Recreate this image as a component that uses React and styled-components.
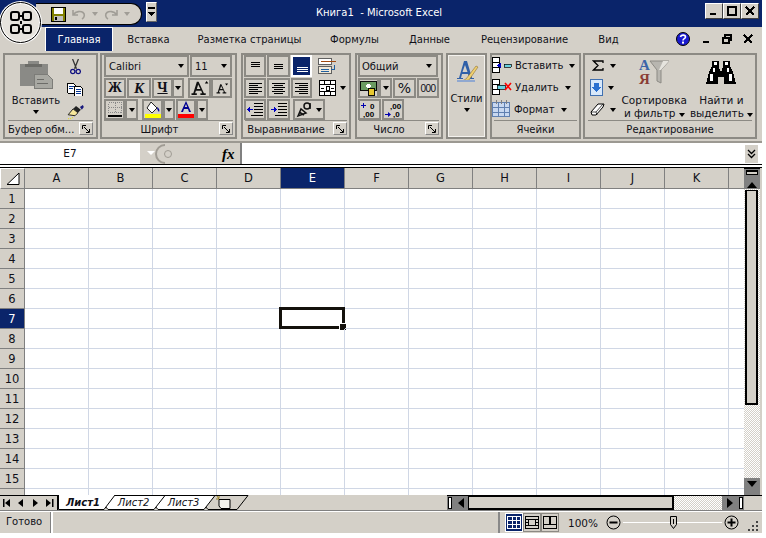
import styled, { createGlobalStyle } from "styled-components";

const FACE = "#d4d0c8";
const NAVY = "#0a246a";
const LINE = "#8c8a84";

const GlobalStyle = createGlobalStyle`
  html, body { margin: 0; background: #fff; }
  * { box-sizing: border-box; }
`;

const Win = styled.div`
  position: relative;
  width: 762px;
  height: 533px;
  background: ${FACE};
  display: flex;
  flex-direction: column;
  overflow: hidden;
  font-family: "DejaVu Sans", sans-serif;
  font-size: 10px;
  color: #101018;
`;

/* title bar */
const TitleBar = styled.div`
  height: 27px;
  flex: none;
  background: ${NAVY};
  display: flex;
  align-items: flex-start;
  padding-right: 3px;
`;
const OfficeBtn = styled.div`
  position: absolute;
  left: 0;
  top: 2px;
  z-index: 3;
  width: 41px;
  height: 41px;
  border-radius: 50%;
  background: #e6e3dd;
  border: 1px solid #000;
  box-shadow: inset 0 0 0 1px #fff, 0 0 0 1px #fff;
  display: flex;
  align-items: center;
  justify-content: center;
`;
const Qat = styled.div`
  width: 106px;
  height: 22px;
  margin: 3px 0 0 36px;
  padding-left: 15px;
  background: ${FACE};
  border-radius: 0 11px 11px 0 / 0 11px 11px 0;
  border: 1px solid #000;
  border-left: 0;
  display: flex;
  align-items: center;
  gap: 6px;
`;
const QatMore = styled.div`
  width: 11px;
  height: 20px;
  margin: 2px 0 0 4px;
  background: ${FACE};
  border: 1px solid #fff;
  border-right-color: #666;
  border-bottom-color: #666;
  display: flex;
  align-items: center;
  justify-content: center;
`;
const Title = styled.div`
  width: 444px;
  text-align: center;
  color: #fff;
  font-size: 10px;
  line-height: 26px;
  white-space: pre;
`;
const WinBtns = styled.div`
  margin: 3px 0 0 auto;
  display: flex;
`;
const WinBtn = styled.div`
  width: 18px;
  height: 16px;
  background: ${FACE};
  border: 1px solid;
  border-color: #fff #404040 #404040 #fff;
  display: flex;
  align-items: center;
  justify-content: center;
`;

/* tabs */
const TabStrip = styled.div`
  height: 24px;
  flex: none;
  padding: 0 9px 0 45px;
  display: flex;
  align-items: stretch;
`;
const Tab = styled.div`
  width: ${(p) => p.$w}px;
  display: flex;
  align-items: center;
  justify-content: center;
  font-size: 10px;
  ${(p) => p.$active && `background: ${NAVY}; color: #fff; border: 1px solid #fff; border-bottom: 0;`}
`;
const TabTools = styled.div`
  margin-left: auto;
  display: flex;
  align-items: center;
  gap: 11px;
`;

/* ribbon */
const Ribbon = styled.div`
  flex: none;
  height: 92px;
  padding: 2px 0 0 3px;
  display: flex;
  align-items: flex-start;
  border-bottom: 2px solid #9c9992;
`;
const Group = styled.div`
  width: ${(p) => p.$w}px;
  margin-left: ${(p) => p.$ml || 0}px;
  height: 86px;
  border: 2px solid ${LINE};
  display: flex;
  flex-direction: column;
`;
const GroupBody = styled.div`
  height: 65px;
  flex: none;
  display: flex;
  ${(p) => p.$col && "flex-direction: column; gap: 1px;"}
  padding: ${(p) => p.$pad || "0 1px"};
`;
const GroupLabel = styled.div`
  position: relative;
  height: 17px;
  margin: 0 ${(p) => p.$inset || 2}px;
  border-top: 1px solid ${LINE};
  display: flex;
  align-items: center;
  justify-content: ${(p) => (p.$left ? "flex-start" : "center")};
  font-size: 10px;
  white-space: nowrap;
  padding-right: ${(p) => p.$pr || 0}px;
`;
const Launcher = styled.div`
  position: absolute;
  right: 0;
  top: 1px;
  width: 14px;
  height: 13px;
  border: 1px solid #fff;
  border-right-color: #888;
  border-bottom-color: #888;
  display: flex;
  align-items: center;
  justify-content: center;
`;
const ToolRow = styled.div`
  display: flex;
  height: ${(p) => p.$h || 20}px;
  gap: ${(p) => p.$gap ?? 1}px;
`;
const Tool = styled.div`
  width: ${(p) => p.$w}px;
  margin-left: ${(p) => p.$ml || 0}px;
  flex: none;
  display: flex;
  align-items: center;
  justify-content: ${(p) => p.$justify || "center"};
  padding: ${(p) => p.$pad || 0};
  border: 2px solid ${(p) => (p.$plain ? "transparent" : LINE)};
  background: ${(p) => (p.$active ? NAVY : "transparent")};
  ${(p) => p.$active && "border-color: #fff;"}
  font-size: 10px;
  white-space: nowrap;
`;
const Glyph = styled.span`
  font-family: "Liberation Serif", serif;
  font-weight: 700;
  font-size: ${(p) => p.$size || 14}px;
  font-style: ${(p) => (p.$italic ? "italic" : "normal")};
  text-decoration: ${(p) => (p.$under ? "underline" : "none")};
`;
const Percent = styled.span`
  font-size: 14px;
`;
const Thousands = styled.span`
  font-family: "Liberation Sans", sans-serif;
  font-size: 10px;
  letter-spacing: -0.5px;
`;
const Drop = styled.i`
  display: inline-block;
  flex: none;
  border: solid transparent;
  border-width: 4px 3.5px 0;
  border-top-color: ${(p) => p.$color || "#000"};
  margin-left: ${(p) => p.$ml || 0}px;
  margin-top: ${(p) => p.$mt || 0}px;
`;
const PasteCol = styled.div`
  width: 62px;
  display: flex;
  flex-direction: column;
  align-items: center;
  padding-top: 5px;
`;
const SmallCol = styled.div`
  width: 16px;
  padding-top: 4px;
  display: flex;
  flex-direction: column;
  align-items: center;
  gap: 8px;
`;
const StackText = styled.div`
  margin-top: ${(p) => p.$mt ?? 6}px;
  text-align: center;
  font-size: ${(p) => p.$size || 10.5}px;
  line-height: 13px;
  white-space: nowrap;
`;
const BigBtn = styled.div`
  width: ${(p) => p.$w}px;
  display: flex;
  flex-direction: column;
  align-items: center;
  padding-top: ${(p) => p.$top || 3}px;
`;
const StylesBtn = styled.div`
  width: 41px;
  margin-left: 3px;
  height: 86px;
  border: 2px solid ${LINE};
  box-shadow: inset 0 0 0 1px #f4f2ee;
  display: flex;
  flex-direction: column;
  align-items: center;
  padding-top: 5px;
  font-size: 10px;
  gap: 4px;
`;
const StylesText = styled.span`
  margin-top: 5px;
`;
const CellRow = styled.div`
  height: 22px;
  display: flex;
  align-items: center;
  gap: 3px;
  font-size: 10px;
  white-space: nowrap;
`;
const SmallStack = styled.div`
  width: 36px;
  padding: 2px 0 0 5px;
  display: flex;
  flex-direction: column;
  gap: 5px;
`;
const StackItem = styled.div`
  height: 17px;
  display: flex;
  align-items: center;
  gap: 5px;
  padding-left: ${(p) => p.$pl || 0}px;
`;

/* formula bar */
const FormulaBar = styled.div`
  flex: none;
  height: 21px;
  display: flex;
`;
const NameBox = styled.div`
  width: 140px;
  background: #fff;
  text-align: center;
  line-height: 20px;
  font-size: 10.5px;
`;
const FxZone = styled.div`
  width: 100px;
  display: flex;
  align-items: center;
  padding-left: 6px;
`;
const FxInput = styled.div`
  flex: 1;
  background: #fff;
  border-left: 2px solid #808080;
  display: flex;
  justify-content: flex-end;
  align-items: center;
  padding-right: 4px;
`;
const Expand = styled.div`
  width: 13px;
  height: 18px;
  background: ${FACE};
  display: flex;
  align-items: center;
  justify-content: center;
`;
const SplitBar = styled.div`
  flex: none;
  height: 4px;
  background: #fff;
  border-top: 1px solid #000;
  border-bottom: 1px solid #000;
`;

/* sheet */
const SheetArea = styled.div`
  flex: none;
  height: 327px;
  display: flex;
  background: ${FACE};
`;
const GridClip = styled.div`
  width: 744px;
  overflow: hidden;
  background: #fff;
`;
const HeadRow = styled.div`
  display: flex;
  height: 21px;
`;
const Corner = styled.div`
  width: 25px;
  flex: none;
  background: ${FACE};
  border: 1px solid #fff;
  border-right: 1px solid #808080;
  border-bottom: 1px solid #808080;
  display: flex;
  align-items: center;
  justify-content: center;
`;
const ColHead = styled.div`
  width: 64px;
  flex: none;
  text-align: center;
  line-height: 20px;
  font-size: 11.5px;
  border-right: 1px solid #808080;
  border-bottom: 1px solid #808080;
  background: ${(p) => (p.$on ? NAVY : FACE)};
  color: ${(p) => (p.$on ? "#fff" : "#101018")};
`;
const GridRow = styled.div`
  display: flex;
  height: 20px;
`;
const RowHead = styled.div`
  width: 25px;
  flex: none;
  text-align: center;
  line-height: 20px;
  font-size: 11.5px;
  border-right: 1px solid #808080;
  border-bottom: 1px solid #808080;
  background: ${(p) => (p.$on ? NAVY : FACE)};
  color: ${(p) => (p.$on ? "#fff" : "#101018")};
`;
const Cell = styled.div`
  position: relative;
  width: 64px;
  flex: none;
  border-right: 1px solid #d0d7e5;
  border-bottom: 1px solid #d0d7e5;
`;
const Selection = styled.div`
  position: absolute;
  left: -2px;
  top: -2px;
  right: -1px;
  bottom: -1px;
  border: 3px solid #14110c;
  &::after {
    content: "";
    position: absolute;
    right: -4px;
    bottom: -4px;
    width: 6px;
    height: 6px;
    background: #14110c;
    border: 1px solid #fff;
    border-right: 0;
    border-bottom: 0;
  }
`;
const VScroll = styled.div`
  width: 16px;
  flex: none;
  display: flex;
  flex-direction: column;
  background: repeating-conic-gradient(${FACE} 0 25%, #fff 0 50%) 0 0 / 2px 2px;
`;
const VCap = styled.div`
  flex: none;
  height: 21px;
  padding: 1px 2px 0;
  background: #808080;
  border-top: 1px solid #000;
  display: flex;
  flex-direction: column;
  align-items: stretch;
`;
const Splitter = styled.div`
  height: 5px;
  flex: none;
  background: ${FACE};
  border: 1px solid #000;
  border-top-width: 2px;
`;
const CapArrow = styled.div`
  flex: 1;
  display: flex;
  align-items: center;
  justify-content: center;
`;
const ScrollBtn = styled.div`
  flex: none;
  width: ${(p) => p.$w || 16}px;
  height: ${(p) => p.$h || "auto"};
  background: #808080;
  display: flex;
  align-items: center;
  justify-content: center;
`;
const VThumb = styled.div`
  height: 215px;
  flex: none;
  margin: 1px 2px 0 1px;
  background: ${FACE};
  border: 2px solid #000;
  border-top-width: 1px;
`;
const VFill = styled.div`
  flex: 1;
`;
const Arrow = styled.i`
  display: block;
  border: solid transparent;
  ${(p) => {
    const d = { up: "bottom", down: "top", left: "right", right: "left" }[p.$dir];
    return `border-width: 5px; border-${d}-color: #000; border-${d}-width: 6px; border-${p.$dir}-width: 0;`;
  }}
`;

/* sheet tabs + h scroll */
const TabsRow = styled.div`
  flex: none;
  height: 16px;
  display: flex;
  border-bottom: 1px solid #808080;
`;
const NavBtns = styled.div`
  width: 58px;
  flex: none;
  display: flex;
  align-items: center;
  gap: 4px;
  padding-left: 2px;
  border-top: 1px solid #000;
  border-right: 1px solid #000;
`;
const SheetTabs = styled.div`
  width: 389px;
  flex: none;
  display: flex;
  overflow: hidden;
`;
const SheetTab = styled.div`
  position: relative;
  z-index: ${(p) => p.$z};
  width: ${(p) => p.$w}px;
  padding-left: ${(p) => p.$pl}px;
  flex: none;
  display: flex;
  align-items: center;
  justify-content: center;
  font-style: italic;
  font-size: 10px;
  font-weight: ${(p) => (p.$active ? 700 : 400)};
  & > span { position: relative; }
`;
const TabShape = styled.svg`
  position: absolute;
  left: 0;
  top: 0;
`;
const HScroll = styled.div`
  flex: 1;
  display: flex;
  align-items: stretch;
  background: ${FACE};
  border-top: 1px solid #000;
`;
const HSplit = styled.div`
  width: 6px;
  flex: none;
  background: #808080;
  padding: 1px 1px;
  display: flex;
`;
const HSplitBar = styled.div`
  flex: 1;
  background: #fff;
  border: 1px solid #000;
`;
const HThumb = styled.div`
  width: 206px;
  flex: none;
  background: ${FACE};
  border: 1px solid #000;
  border-width: 1px 2px 2px 1px;
`;
const HFill = styled.div`
  width: 48px;
  flex: none;
  background: repeating-conic-gradient(${FACE} 0 25%, #fff 0 50%) 0 0 / 2px 2px;
`;

/* status bar */
const StatusBar = styled.div`
  flex: 1;
  display: flex;
  align-items: center;
  border-top: 1px solid #fff;
  font-size: 10px;
`;
const StatusText = styled.div`
  width: 53px;
  flex: none;
  height: 100%;
  padding-left: 6px;
  line-height: 20px;
  border-right: 2px solid #fff;
  box-shadow: inset -1px 0 0 #808080;
`;
const ZoomPane = styled.div`
  margin-left: 445px;
  flex: none;
  height: 100%;
  padding-left: 5px;
  border-left: 2px solid #888;
  display: flex;
  align-items: center;
`;
const ViewBtn = styled.div`
  width: 18px;
  flex: none;
  height: 19px;
  background: ${(p) => (p.$on ? NAVY : FACE)};
  border: ${(p) => (p.$on ? "1px solid #fff" : `1px solid ${LINE}`)};
  display: flex;
  align-items: center;
  justify-content: center;
`;
const ZoomLabel = styled.div`
  width: 38px;
  flex: none;
  margin: 0 4px 0 5px;
  text-align: center;
  font-size: 10.5px;
`;
const SliderWrap = styled.div`
  position: relative;
  width: 99px;
  flex: none;
  height: 1px;
  margin: 0 2px;
  background: #fff;
`;
const SliderKnob = styled.svg`
  position: absolute;
  left: 47px;
  top: -6px;
`;
const Grip = styled.svg`
  flex: none;
  margin-left: 7px;
  margin-top: 6px;
`;

/* icons */
const OfficeLogo = () => (
  <svg width="22" height="23" viewBox="0 0 22 23" fill="none" stroke="#000" strokeWidth="2">
    <rect x="1" y="1" width="8" height="8" rx="2" />
    <rect x="13" y="1" width="8" height="8" rx="2" />
    <rect x="1" y="14" width="8" height="8" rx="2" />
    <rect x="13" y="14" width="8" height="8" rx="2" />
    <path d="M9 5h4M9 18h4" />
    <path d="M10 10h2v3h-2z" fill="#000" strokeWidth="0" />
  </svg>
);
const SaveIcon = () => (
  <svg width="15" height="15" viewBox="0 0 15 15" shapeRendering="crispEdges">
    <rect x="0.5" y="0.5" width="14" height="14" fill="#808000" stroke="#000" />
    <rect x="3" y="1" width="9" height="6" fill="#fff" />
    <rect x="3" y="9" width="9" height="5" fill="#c0c0c0" />
    <rect x="4" y="10" width="2" height="3" fill="#000" />
  </svg>
);
const UndoIcon = ({ flip }) => (
  <svg width="14" height="11" viewBox="0 0 14 11" fill="none" stroke="#a09d96" strokeWidth="1.6" style={{ transform: flip ? "scaleX(-1)" : "none" }}>
    <path d="M1 1v5h5M1.5 5.5C4 2 9 2 11 3.5s1.8 5-1 6.5" />
  </svg>
);
const QatMoreIcon = () => (
  <svg width="7" height="10" viewBox="0 0 7 10" shapeRendering="crispEdges">
    <path d="M0 0h7v2H0z" fill="#000" />
    <path d="M0 5h7L3.500 9z" fill="#000" />
  </svg>
);
const Chrome = ({ d }) => (
  <svg width="10" height="10" viewBox="0 0 10 10" fill="none" stroke="#000" strokeWidth="2" shapeRendering="crispEdges">
    <path d={d} />
  </svg>
);
const HelpIcon = () => (
  <svg width="14" height="14" viewBox="0 0 14 14">
    <circle cx="7" cy="7" r="6.5" fill="#1a1ad0" stroke="#000" strokeWidth="1" />
    <path d="M4.5 5C5 2.5 9.5 2.5 9.5 5 9.5 6.8 7 6.6 7 8.5" fill="none" stroke="#fff" strokeWidth="1.6" />
    <rect x="6" y="9.6" width="2" height="2" fill="#fff" />
  </svg>
);
const LaunchIcon = () => (
  <svg width="8" height="8" viewBox="0 0 8 8" fill="none" stroke="#000">
    <path d="M.5 4V.5H4M2 2l5 5M7.5 4v3.5H4" />
  </svg>
);
const PasteIcon = () => (
  <svg width="33" height="30" viewBox="0 0 33 30" shapeRendering="crispEdges">
    <path d="M0 4h8V1h11v3h9v22H0z" fill="#8a8a86" />
    <rect x="5" y="4" width="17" height="3" fill="#6c6c68" />
    <path d="M14 14h13l5 5v9H14z" fill="#a8a8a2" stroke="#7c7c78" />
    <path d="M17 19h7M17 23h11" stroke="#6c6c68" />
  </svg>
);
const CutIcon = () => (
  <svg width="11" height="16" viewBox="0 0 11 16" fill="none" strokeWidth="1.3">
    <path d="M2.500 0l4 10M8.500 0l-4 10" stroke="#333" />
    <circle cx="2.700" cy="12.800" r="2.200" stroke="#101080" />
    <circle cx="8.300" cy="12.800" r="2.200" stroke="#101080" />
  </svg>
);
const CopyIcon = () => (
  <svg width="16" height="14" viewBox="0 0 16 14" fill="#fff" stroke="#000" shapeRendering="crispEdges">
    <path d="M.5.5h6l2 2v8h-8z" />
    <path d="M7.5 3.5h6l2 2v8h-8z" />
    <path d="M2 4h5M2 6h4M9 7h5M9 9h5M9 11h5" fill="none" stroke="#003090" />
  </svg>
);
const PainterIcon = () => (
  <svg width="17" height="16" viewBox="0 0 17 16">
    <path d="M9 2l5 4-3 3-5-4z" fill="#222" />
    <path d="M6 5l5 4-3 3-7-1z" fill="#f6e79a" stroke="#222" />
    <path d="M13 3l3-2 1 2-2 3z" fill="#18187c" />
    <path d="M1 15h1M3 15h1M5 14h1" stroke="#e6e000" />
  </svg>
);
const BorderIcon = () => (
  <svg width="14" height="15" viewBox="0 0 14 15" fill="none" shapeRendering="crispEdges">
    <path d="M.5.5h13v10h-13zM7 .5v10M.5 5.5h13" stroke="#888" strokeDasharray="1 1" />
    <path d="M0 14h14" stroke="#000" strokeWidth="2" />
  </svg>
);
const FillIcon = () => (
  <svg width="16" height="17" viewBox="0 0 16 17">
    <path d="M6 1l6 6-5 5-5-5z" fill="#fff" stroke="#222" />
    <path d="M12 6c2 1 3 3 2 5-1-1-2-3-2-5z" fill="#000090" />
    <rect x="0" y="13" width="16" height="4" fill="#ffff00" />
  </svg>
);
const ColorA = () => (
  <svg width="16" height="17" viewBox="0 0 16 17">
    <path d="M8 0l5 11h-2L10 8H6l-1 3H3zM6.8 6h2.400L8 3z" fill="#000090" fillRule="evenodd" />
    <rect x="0" y="13" width="16" height="4" fill="#f00" />
  </svg>
);
const GrowA = ({ size, w, up }) => (
  <svg width={w} height={size} viewBox="0 0 20 18">
    <path d="M7 2h2l6 13h2v2h-6v-2h2l-1-3H6l-1 3h2v2H1v-2h2zM7 10h4L8.5 5z" fill="#111" fillRule="evenodd" />
    <path d={up ? "M16 4l2-3 2 3z" : "M15 1h5l-2.500 3z"} fill="#000" />
  </svg>
);
const Lines = ({ rows, color = "#000", h = 11, w = 15 }) => (
  <svg width={w} height={h} viewBox={`0 0 ${w} ${h}`} stroke={color} strokeWidth="1" shapeRendering="crispEdges">
    {rows.map(([y, a, b]) => (
      <path key={y} d={`M${a} ${y + 0.5}H${b}`} />
    ))}
  </svg>
);
const WrapIcon = () => (
  <svg width="18" height="17" viewBox="0 0 18 17" fill="none" shapeRendering="crispEdges">
    <rect x=".5" y=".5" width="13" height="6" fill="#fff" stroke="#606060" />
    <rect x=".5" y="8.5" width="13" height="7" fill="#f0e8d8" stroke="#606060" />
    <path d="M3 3.500h15" stroke="#a04810" />
    <path d="M3 11h8M3 13h8" stroke="#2060a0" />
    <path d="M16 7v4h-3" stroke="#2060a0" />
  </svg>
);
const MergeIcon = () => (
  <svg width="18" height="16" viewBox="0 0 18 16" shapeRendering="crispEdges">
    <rect width="17" height="16" fill="#000" />
    <path d="M1 1h4v3H1zM6 1h5v3H6zM12 1h4v3h-4zM1 12h4v3H1zM6 12h5v3H6zM12 12h4v3h-4z" fill="#fff" />
    <rect x="1" y="5" width="15" height="6" fill="#fff" />
    <path d="M2 8h3M12 8h3" stroke="#000" />
    <path d="M7 6h3v4H7z" fill="none" stroke="#000" />
  </svg>
);
const IndentIcon = ({ right }) => (
  <svg width="16" height="13" viewBox="0 0 16 13" shapeRendering="crispEdges">
    <path d="M7 .5h9M7 3.5h9M7 6.5h9M7 9.5h9M4 12.5h12" stroke="#000" />
    <path d={right ? "M0 6h3V4l3 2.5L3 9V7H0z" : "M6 6H3V4L0 6.5 3 9V7h3z"} fill="#0000c0" />
  </svg>
);
const OrientIcon = () => (
  <svg width="17" height="17" viewBox="0 0 17 17" fill="none" stroke="#111" strokeWidth="1.5">
    <path d="M2 15l3-7 5 4zM3 11l5 3" />
    <circle cx="11" cy="5" r="3" />
    <path d="M14 2v6" />
  </svg>
);
const MoneyIcon = () => (
  <svg width="18" height="15" viewBox="0 0 18 15" shapeRendering="crispEdges">
    <rect x=".5" y=".5" width="17" height="9" fill="#6a9a60" stroke="#000" />
    <circle cx="9" cy="5" r="2.5" fill="#fff" />
    <rect x="9" y="8" width="6" height="7" fill="#e8c830" stroke="#000" />
  </svg>
);
const DecIcon = ({ more }) => (
  <svg width="17" height="16" viewBox="0 0 17 16" fontFamily="Liberation Sans, sans-serif" fontSize="8" fontWeight="700">
    <path d={more ? "M0 3h2V1h1v2h2v1H3v2H2V4H0z" : "M0 12h3v-2l3 2.500-3 2.500v-2H0z"} fill="#0000b0" />
    <text x={more ? 9 : 5} y="7" fill="#000">{more ? "0" : ",00"}</text>
    <text x={more ? 2 : 8} y="15" fill="#000">{more ? ",00" : ",0"}</text>
  </svg>
);
const StylesIcon = () => (
  <svg width="26" height="24" viewBox="0 0 26 24">
    <path d="M10 1h3l5 17h2v1h-7v-1h2l-1-4H8l-1 4h2v1H3v-1h2zM8.500 12h5L11 5z" fill="#3060a8" fillRule="evenodd" />
    <path d="M8 21l4-2 10-13 2 1-9 13z" fill="#f0d070" stroke="#806020" strokeWidth=".5" />
    <path d="M3 21h18" stroke="#90a8d0" strokeWidth="2" />
  </svg>
);
const CellInsert = ({ kind }) => (
  <svg width="20" height="19" viewBox="0 0 20 19" shapeRendering="crispEdges">
    <path d="M.5 1.500h7v5h-7zM.5 6.500h7v5h-7zM.5 11.500h7v5h-7z" fill="#fff" stroke="#000" />
    {kind === "ins" && <path d="M12 8h7v3h-7z" fill="#6ad0e0" stroke="#000" strokeWidth=".7" />}
    {kind === "ins" && <path d="M5 9.500l4-3v6z" fill="#0000c0" />}
    {kind === "del" && <path d="M5 7h8v4H5z" fill="#6ad0e0" stroke="#000" strokeWidth=".7" />}
    {kind === "del" && <path d="M13 5l6 7M19 5l-6 7" stroke="#f00" strokeWidth="1.6" shapeRendering="auto" />}
  </svg>
);
const FormatIcon = () => (
  <svg width="19" height="19" viewBox="0 0 19 19" shapeRendering="crispEdges">
    <rect x=".5" y="2.500" width="17" height="14" fill="#c8d8f0" stroke="#6080b0" />
    <path d="M6 3v13M12 3v13M1 7h16M1 12h16" stroke="#6080b0" />
    <path d="M4 0v4M9 0v4M14 0v4" stroke="#808080" />
  </svg>
);
const SumIcon = () => (
  <svg width="13" height="11" viewBox="0 0 13 11" fill="none" stroke="#000" strokeWidth="1.300">
    <path d="M11 3V1H1.500L6 5.500 1.500 10H11V8" />
  </svg>
);
const FillDownIcon = () => (
  <svg width="13" height="17" viewBox="0 0 13 17" shapeRendering="crispEdges">
    <rect x=".5" y=".5" width="12" height="16" fill="#d8e8fa" stroke="#4070b0" />
    <path d="M4 4h5v4h2.500L6.500 13 1.500 8H4z" fill="#2a70d0" />
  </svg>
);
const EraserIcon = () => (
  <svg width="15" height="13" viewBox="0 0 15 13" stroke="#000">
    <path d="M1 9l7-8h6l-1 3-7 8H2z" fill="#fff" />
    <path d="M1 9h5l1 3M6 9l7-8" fill="none" strokeWidth=".7" />
  </svg>
);
const SortIcon = () => (
  <svg width="32" height="30" viewBox="0 0 32 30" fontFamily="Liberation Serif, serif" fontWeight="700" fontSize="15">
    <path d="M12 3h19l-8 9v13l-4-2V12z" fill="#b8b6b0" stroke="#8c8a84" />
    <path d="M23 12l8-9h-6l-4 9z" fill="#e6e4de" />
    <text x="1" y="12" fill="#3c64a8">A</text>
    <text x="1" y="26" fill="#8a3c34">Я</text>
  </svg>
);
const BinocularIcon = () => (
  <svg width="30" height="26" viewBox="0 0 30 26" shapeRendering="crispEdges">
    <path d="M3 12l3-6V1h7v5l1 5h2l1-5V1h7v5l3 6 3 12H18v-7h-6v7H0z" fill="#000" />
    <path d="M8 2h3v3H8zM19 2h3v3h-3zM4 14h3v7H4zM23 14h3v7h-3zM7 8h2v4H7zM21 8h2v4h-2z" fill="#fff" />
  </svg>
);
const FormulaIcons = () => (
  <svg width="92" height="20" viewBox="0 0 92 20" fill="none">
    <path d="M1 7l4 4 4-4z" fill="#fff" />
    <path d="M19 1a9 9 0 0 0 0 18" stroke="#a09c94" strokeWidth="2" />
    <circle cx="22" cy="10" r="3.500" stroke="#a09c94" />
    <text x="76" y="15" fontFamily="Liberation Serif, serif" fontStyle="italic" fontWeight="700" fontSize="15" fill="#000">fx</text>
  </svg>
);
const SkipIcon = ({ dir }) => {
  const shapes = {
    first: "M1 1h1.500v8H1zM8 1v8L3 5z",
    prev: "M7 1v8L2 5z",
    next: "M3 1v8l5-4z",
    last: "M8 1h1.500v8H8zM2 1v8l5-4z",
  };
  return (
    <svg width="10" height="10" viewBox="0 0 10 10">
      <path d={shapes[dir]} fill="#000" />
    </svg>
  );
};
const ActiveTabShape = ({ w }) => (
  <TabShape width={w + 12} height="16" viewBox={`0 0 ${w + 12} 16`}>
    <path d={`M.5 0V14.500H${w}L${w + 11} 0`} fill="#fff" stroke="#000" />
  </TabShape>
);
const TabOutline = ({ w, fill = "#fff" }) => (
  <TabShape width={w + 12} height="16" viewBox={`0 0 ${w + 12} 16`}>
    <path d={`M11 .5H${w + 11}L${w} 14.500H4L0 10`} fill={fill} stroke="#000" />
  </TabShape>
);
const NewSheetIcon = () => (
  <svg width="15" height="13" viewBox="0 0 15 13" fill="none" stroke="#000" style={{ position: "relative" }}>
    <path d="M3 3.500h11v9H5L3 10z" fill="#f4f4ee" />
    <path d="M1 0l2 3M0 3h3M3 0v2" strokeWidth=".8" stroke="#8a7000" />
  </svg>
);
const GridViewIcon = ({ color, kind }) => (
  <svg width="14" height="13" viewBox="0 0 14 13" fill="none" stroke={color} shapeRendering="crispEdges">
    {kind === "grid" && <path d="M.5.500h13v12H.5zM5 .500v12M9.500.500v12M.5 4.500h13M.5 8.500h13" />}
    {kind === "page" && <path d="M.5.500h13v12H.5zM3.500 3.500h7v6h-7zM1 3h2M1 6h2M1 9h2M11 3h2M11 6h2M11 9h2" />}
    {kind === "break" && <path d="M.5.500h13v12H.5zM.5.500v8h13v-8M7 .500v8" strokeWidth="1.5" />}
  </svg>
);
const CircleBtn = ({ plus }) => (
  <svg width="15" height="15" viewBox="0 0 15 15" fill="none" stroke="#000" style={{ flex: "none" }}>
    <circle cx="7.500" cy="7.500" r="6.500" />
    <path d={plus ? "M3.500 7.500h8M7.500 3.500v8" : "M3.500 7.500h8"} strokeWidth="2" />
  </svg>
);

const COLS = "ABCDEFGHIJKL".split("");
const ROWS = Array.from({ length: 16 }, (_, i) => i + 1);

const ribbonTabs = [
  ["Главная", 68, true],
  ["Вставка", 71],
  ["Разметка страницы", 131],
  ["Формулы", 79],
  ["Данные", 71],
  ["Рецензирование", 119],
  ["Вид", 49],
];

const L = {
  top: [[1, 3, 12], [3, 3, 12], [5, 3, 12]],
  middle: [[3, 3, 12], [5, 3, 12], [7, 3, 12]],
  bottom: [[6, 3, 14], [8, 3, 14], [10, 3, 14]],
  left: [[0, 1, 14], [2, 1, 10], [4, 1, 14], [6, 1, 10], [8, 1, 14], [10, 1, 10]],
  center: [[0, 1, 14], [2, 3, 12], [4, 1, 14], [6, 3, 12], [8, 1, 14], [10, 3, 12]],
  right: [[0, 1, 14], [2, 5, 14], [4, 1, 14], [6, 5, 14], [8, 1, 14], [10, 5, 14]],
};

function App() {
  return (
    <>
      <GlobalStyle />
      <Win>
        <OfficeBtn>
          <OfficeLogo />
        </OfficeBtn>
        <TitleBar>
          <Qat>
            <SaveIcon />
            <UndoIcon />
            <Drop $color="#a09d96" />
            <UndoIcon flip />
            <Drop $color="#a09d96" />
          </Qat>
          <QatMore>
            <QatMoreIcon />
          </QatMore>
          <Title>Книга1  - Microsoft Excel</Title>
          <WinBtns>
            <WinBtn><Chrome d="M1 8h6" /></WinBtn>
            <WinBtn><Chrome d="M1 1h8v8H1z" /></WinBtn>
            <WinBtn><Chrome d="M1 1l8 8M9 1L1 9" /></WinBtn>
          </WinBtns>
        </TitleBar>

        <TabStrip>
          {ribbonTabs.map(([name, w, active]) => (
            <Tab key={name} $w={w} $active={active}>{name}</Tab>
          ))}
          <TabTools>
            <HelpIcon />
            <Chrome d="M2 8h6" />
            <Chrome d="M1 4h6v5H1zM3 3V1h6v5H7" />
            <Chrome d="M1 1l8 8M9 1L1 9" />
          </TabTools>
        </TabStrip>

        <Ribbon>
          <Group $w={95}>
            <GroupBody $pad="0">
              <PasteCol>
                <PasteIcon />
                <StackText $mt={4} $size={10}>Вставить</StackText>
                <Drop $mt={3} />
              </PasteCol>
              <SmallCol>
                <CutIcon />
                <CopyIcon />
                <PainterIcon />
              </SmallCol>
            </GroupBody>
            <GroupLabel $inset={3} $left>
              Буфер обм...
              <Launcher><LaunchIcon /></Launcher>
            </GroupLabel>
          </Group>

          <Group $w={137} $ml={2}>
            <GroupBody $col $pad="0 2px">
              <ToolRow $h={22}>
                <Tool $w={85} $justify="space-between" $pad="0 3px">Calibri<Drop /></Tool>
                <Tool $w={42} $justify="space-between" $pad="0 3px">11<Drop /></Tool>
              </ToolRow>
              <ToolRow $gap={0}>
                <Tool $w={22}><Glyph $size={14}>Ж</Glyph></Tool>
                <Tool $w={24} $ml={1}><Glyph $size={15} $italic>К</Glyph></Tool>
                <Tool $w={21} $ml={1}><Glyph $size={14} $under>Ч</Glyph></Tool>
                <Tool $w={12} $ml={-1}><Drop /></Tool>
                <Tool $w={23} $ml={4}><GrowA size={16} w={19} up /></Tool>
                <Tool $w={21}><GrowA size={11} w={14} /></Tool>
              </ToolRow>
              <ToolRow $gap={0} $h={21}>
                <Tool $w={21}><BorderIcon /></Tool>
                <Tool $w={13}><Drop /></Tool>
                <Tool $w={21} $ml={4}><FillIcon /></Tool>
                <Tool $w={12}><Drop /></Tool>
                <Tool $w={20} $ml={1}><ColorA /></Tool>
                <Tool $w={12}><Drop /></Tool>
              </ToolRow>
            </GroupBody>
            <GroupLabel $pr={18}>
              Шрифт
              <Launcher><LaunchIcon /></Launcher>
            </GroupLabel>
          </Group>

          <Group $w={110} $ml={4}>
            <GroupBody $col $pad="0 1px">
              <ToolRow $h={22}>
                <Tool $w={22}><Lines rows={L.top} /></Tool>
                <Tool $w={23}><Lines rows={L.middle} /></Tool>
                <Tool $w={21} $active><Lines rows={L.bottom} color="#fff" /></Tool>
                <Tool $w={22} $plain $ml={3}><WrapIcon /></Tool>
              </ToolRow>
              <ToolRow>
                <Tool $w={22}><Lines rows={L.left} /></Tool>
                <Tool $w={23}><Lines rows={L.center} /></Tool>
                <Tool $w={21}><Lines rows={L.right} /></Tool>
                <Tool $w={34} $plain $ml={3} $justify="flex-start" $pad="0 0 0 1px"><MergeIcon /><Drop $ml={3} /></Tool>
              </ToolRow>
              <ToolRow $h={21}>
                <Tool $w={22}><IndentIcon /></Tool>
                <Tool $w={23}><IndentIcon right /></Tool>
                <Tool $w={32} $ml={2}><OrientIcon /><Drop $ml={3} /></Tool>
              </ToolRow>
            </GroupBody>
            <GroupLabel $pr={20}>
              Выравнивание
              <Launcher><LaunchIcon /></Launcher>
            </GroupLabel>
          </Group>

          <Group $w={88} $ml={4}>
            <GroupBody $col $pad="0 1px">
              <ToolRow $h={22}>
                <Tool $w={80} $justify="space-between" $pad="0 4px 0 2px">Общий<Drop /></Tool>
              </ToolRow>
              <ToolRow $gap={0}>
                <Tool $w={21}><MoneyIcon /></Tool>
                <Tool $w={13}><Drop /></Tool>
                <Tool $w={23} $ml={1}><Percent>%</Percent></Tool>
                <Tool $w={22} $ml={1}><Thousands>000</Thousands></Tool>
              </ToolRow>
              <ToolRow $h={21}>
                <Tool $w={23}><DecIcon more /></Tool>
                <Tool $w={22}><DecIcon /></Tool>
              </ToolRow>
            </GroupBody>
            <GroupLabel $pr={20}>
              Число
              <Launcher><LaunchIcon /></Launcher>
            </GroupLabel>
          </Group>

          <StylesBtn>
            <StylesIcon />
            <StylesText>Стили</StylesText>
            <Drop />
          </StylesBtn>

          <Group $w={91} $ml={3}>
            <GroupBody $col $pad="0">
              <CellRow><CellInsert kind="ins" />Вставить<Drop $ml={3} /></CellRow>
              <CellRow><CellInsert kind="del" />Удалить<Drop $ml={3} /></CellRow>
              <CellRow><FormatIcon />Формат<Drop $ml={3} /></CellRow>
            </GroupBody>
            <GroupLabel>Ячейки</GroupLabel>
          </Group>

          <Group $w={174} $ml={2}>
            <GroupBody $pad="0">
              <SmallStack>
                <StackItem $pl={2}><SumIcon /><Drop /></StackItem>
                <StackItem><FillDownIcon /><Drop /></StackItem>
                <StackItem><EraserIcon /><Drop /></StackItem>
              </SmallStack>
              <BigBtn $w={68} $top={3}>
                <SortIcon />
                <StackText>Сортировка<br />и фильтр<Drop $ml={3} /></StackText>
              </BigBtn>
              <BigBtn $w={68} $top={5}>
                <BinocularIcon />
                <StackText $mt={8}>Найти и<br />выделить<Drop $ml={3} /></StackText>
              </BigBtn>
            </GroupBody>
            <GroupLabel $inset={3}>Редактирование</GroupLabel>
          </Group>
        </Ribbon>

        <FormulaBar>
          <NameBox>E7</NameBox>
          <FxZone>
            <FormulaIcons />
          </FxZone>
          <FxInput>
            <Expand>
              <svg width="9" height="10" viewBox="0 0 9 10" fill="none" stroke="#000" strokeWidth="1.300">
                <path d="M1 1l3.500 3.500L8 1M1 5l3.500 3.500L8 5" />
              </svg>
            </Expand>
          </FxInput>
        </FormulaBar>
        <SplitBar />

        <SheetArea>
          <GridClip>
            <HeadRow>
              <Corner>
                <svg width="14" height="13" viewBox="0 0 14 13" fill="none">
                  <path d="M1 12.500h12V1z" stroke="#000" fill="#fff" />
                </svg>
              </Corner>
              {COLS.map((c) => (
                <ColHead key={c} $on={c === "E"}>{c !== "L" && c}</ColHead>
              ))}
            </HeadRow>
            {ROWS.map((r) => (
              <GridRow key={r}>
                <RowHead $on={r === 7}>{r < 16 && r}</RowHead>
                {COLS.map((c) => (
                  <Cell key={c}>{r === 7 && c === "E" && <Selection />}</Cell>
                ))}
              </GridRow>
            ))}
          </GridClip>
          <VScroll>
            <VCap>
              <Splitter />
              <CapArrow><Arrow $dir="up" /></CapArrow>
            </VCap>
            <VThumb />
            <VFill />
            <ScrollBtn $h="17px"><Arrow $dir="down" /></ScrollBtn>
          </VScroll>
        </SheetArea>

        <TabsRow>
          <NavBtns>
            <SkipIcon dir="first" />
            <SkipIcon dir="prev" />
            <SkipIcon dir="next" />
            <SkipIcon dir="last" />
          </NavBtns>
          <SheetTabs>
            <SheetTab $w={46} $pl={4} $z={4} $active>
              <ActiveTabShape w={46} />
              <span>Лист1</span>
            </SheetTab>
            <SheetTab $w={50} $pl={9} $z={3}>
              <TabOutline w={50} />
              <span>Лист2</span>
            </SheetTab>
            <SheetTab $w={50} $pl={9} $z={2}>
              <TabOutline w={50} />
              <span>Лист3</span>
            </SheetTab>
            <SheetTab $w={33} $pl={6} $z={1}>
              <TabOutline w={33} fill={FACE} />
              <NewSheetIcon />
            </SheetTab>
          </SheetTabs>
          <HScroll>
            <HSplit><HSplitBar /></HSplit>
            <ScrollBtn $w={15}><Arrow $dir="left" /></ScrollBtn>
            <HThumb />
            <HFill />
            <ScrollBtn><Arrow $dir="right" /></ScrollBtn>
            <HSplit><HSplitBar /></HSplit>
          </HScroll>
        </TabsRow>

        <StatusBar>
          <StatusText>Готово</StatusText>
          <ZoomPane>
            <ViewBtn $on><GridViewIcon color="#fff" kind="grid" /></ViewBtn>
            <ViewBtn><GridViewIcon color="#000" kind="page" /></ViewBtn>
            <ViewBtn><GridViewIcon color="#000" kind="break" /></ViewBtn>
            <ZoomLabel>100%</ZoomLabel>
            <CircleBtn />
            <SliderWrap>
              <SliderKnob width="7" height="13" viewBox="0 0 7 13">
                <path d="M.5.500h6v8L3.500 12.500.5 8.500z" fill={FACE} stroke="#000" />
                <path d="M3.500 3v5" stroke="#000" />
              </SliderKnob>
            </SliderWrap>
            <CircleBtn plus />
            <Grip width="14" height="12" viewBox="0 0 14 12" fill="#444">
              <path d="M10 1h2v2h-2zM6 5h2v2H6zM10 5h2v2h-2zM2 9h2v2H2zM6 9h2v2H6zM10 9h2v2h-2z" />
            </Grip>
          </ZoomPane>
        </StatusBar>
      </Win>
    </>
  );
}

export default App;
